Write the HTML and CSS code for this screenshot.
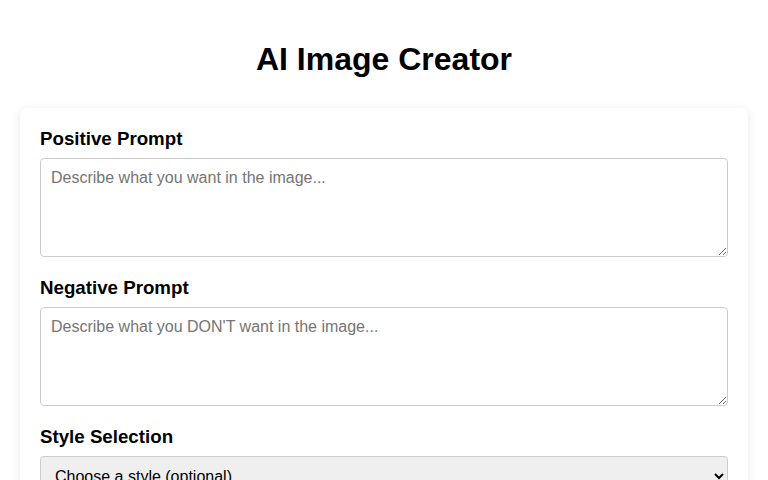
FILE: index.html
```html
<!DOCTYPE html>
<html>
<head>
<meta charset="utf-8">
<link rel="stylesheet" href="styles.css">
</head>
<body>
<div class="page">
  <h1 class="title">AI Image Creator</h1>
  <div class="card">
    <div class="field">
      <label class="label">Positive Prompt</label>
      <textarea class="input" placeholder="Describe what you want in the image..."></textarea>
    </div>
    <div class="field">
      <label class="label">Negative Prompt</label>
      <textarea class="input" placeholder="Describe what you DON'T want in the image..."></textarea>
    </div>
    <div class="field">
      <label class="label">Style Selection</label>
      <select class="select">
        <option>Choose a style (optional)</option>
      </select>
    </div>
  </div>
</div>
</body>
</html>
```
FILE: styles.css
```css
html, body {
  margin: 0;
  padding: 0;
  background: #ffffff;
  font-family: "Liberation Sans", Arial, sans-serif;
  color: #000;
}
.page {
  padding: 20px;
}
.title {
  font-size: 32px;
  font-weight: bold;
  text-align: center;
  margin: 21px 0 30px;
  line-height: 37px;
}
.card {
  background: #fff;
  border-radius: 8px;
  box-shadow: 0 2px 10px rgba(0, 0, 0, 0.1);
  padding: 20px;
  display: flex;
  flex-direction: column;
  gap: 20px;
}
.field {
  display: flex;
  flex-direction: column;
}
.label {
  font-size: 18.72px;
  font-weight: bold;
  line-height: 22px;
  margin-bottom: 8px;
}
.input {
  box-sizing: border-box;
  height: 99px;
  width: 100%;
  border: 1px solid #ccc;
  border-radius: 4px;
  padding: 10px;
  font-family: "Liberation Sans", Arial, sans-serif;
  font-size: 16px;
  resize: vertical;
}
.input::placeholder {
  color: #757575;
}
.select {
  box-sizing: border-box;
  width: 100%;
  border: 1px solid #ccc;
  border-radius: 4px;
  padding: 10px;
  font-family: "Liberation Sans", Arial, sans-serif;
  font-size: 16px;
  background: #efefef;
}
```
